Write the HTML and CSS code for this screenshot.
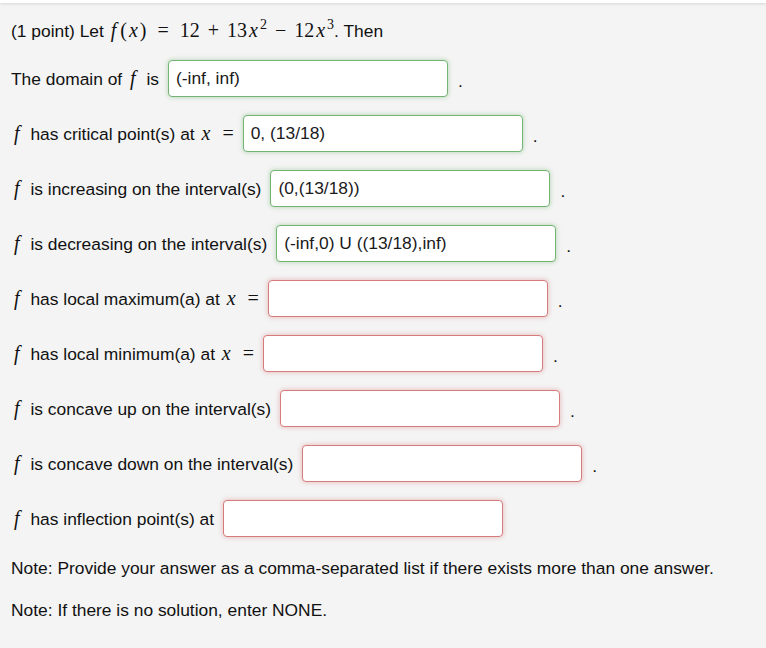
FILE: index.html
```html
<!DOCTYPE html>
<html lang="en">
<head>
    <meta charset="UTF-8">
    <meta name="viewport" content="width=device-width, initial-scale=1.0">
    <title>Problem</title>
    <link rel="stylesheet" href="styles.css">
</head>
<body>
    <div class="top-bar"></div>
    <div class="problem">
        <p class="intro">(1 point) Let <span class="math"><i class="fn">f</i>(<i class="var">x</i>)<span class="rel">=</span>12<span class="bin">+</span>13<i class="var">x</i><sup>2</sup><span class="bin">&minus;</span>12<i class="var">x</i><sup>3</sup></span>. Then</p>

        <div class="row">
            <span class="label">The domain of <i class="mi">f</i> is</span>
            <input class="answer correct" type="text" value="(-inf, inf)">
            <span class="dot">.</span>
        </div>
        <div class="row">
            <span class="label"><i class="mi">f</i> has critical point(s) at <span class="math"><i class="var">x</i><span class="rel">=</span></span></span>
            <input class="answer correct" type="text" value="0, (13/18)">
            <span class="dot">.</span>
        </div>
        <div class="row">
            <span class="label"><i class="mi">f</i> is increasing on the interval(s)</span>
            <input class="answer correct" type="text" value="(0,(13/18))">
            <span class="dot">.</span>
        </div>
        <div class="row">
            <span class="label"><i class="mi">f</i> is decreasing on the interval(s)</span>
            <input class="answer correct" type="text" value="(-inf,0) U ((13/18),inf)">
            <span class="dot">.</span>
        </div>
        <div class="row">
            <span class="label"><i class="mi">f</i> has local maximum(a) at <span class="math"><i class="var">x</i><span class="rel">=</span></span></span>
            <input class="answer wrong" type="text" value="">
            <span class="dot">.</span>
        </div>
        <div class="row">
            <span class="label"><i class="mi">f</i> has local minimum(a) at <span class="math"><i class="var">x</i><span class="rel">=</span></span></span>
            <input class="answer wrong" type="text" value="">
            <span class="dot">.</span>
        </div>
        <div class="row">
            <span class="label"><i class="mi">f</i> is concave up on the interval(s)</span>
            <input class="answer wrong" type="text" value="">
            <span class="dot">.</span>
        </div>
        <div class="row">
            <span class="label"><i class="mi">f</i> is concave down on the interval(s)</span>
            <input class="answer wrong" type="text" value="">
            <span class="dot">.</span>
        </div>
        <div class="row">
            <span class="label"><i class="mi">f</i> has inflection point(s) at</span>
            <input class="answer wrong" type="text" value="">
        </div>

        <p class="note">Note: Provide your answer as a comma-separated list if there exists more than one answer.</p>
        <p class="note">Note: If there is no solution, enter NONE.</p>
    </div>
</body>
</html>
```

FILE: styles.css
```css
* {
    box-sizing: border-box;
}

body {
    margin: 0;
    min-height: 100vh;
    background-color: #f4f4f4;
    font-family: Arial, "Liberation Sans", sans-serif;
    font-size: 17.4px;
    color: #111111;
}

.top-bar {
    height: 3px;
    background-color: #ffffff;
    box-shadow: 0 1px 3px rgba(0, 0, 0, 0.12);
}

.problem {
    padding: 0 11px;
}

.intro {
    margin: 17px 0 0;
    line-height: 20px;
}

/* math set in a serif, spaced out to mimic TeX */
.math,
.mi {
    font-family: "Liberation Serif", "DejaVu Serif", serif;
    font-size: 20px;
    font-style: normal;
}

.math i,
.mi {
    font-style: italic;
}

.mi {
    padding: 0 6px 0 3px;
}

.fn {
    padding: 0 4px 0 2px;
}

.var {
    padding: 0 2px;
}

.math sup {
    font-size: 14px;
    line-height: 0;
}

.rel {
    margin: 0 11px;
}

.bin {
    margin: 0 8px;
}

.row {
    display: flex;
    align-items: center;
    height: 37px;
    margin-top: 18px;
}

.intro + .row {
    margin-top: 19px;
}

.label {
    white-space: nowrap;
}

.label .rel {
    margin: 0 0 0 10px;
}

.answer {
    width: 280px;
    height: 37px;
    margin-left: 9px;
    padding: 0 7px;
    border: 1px solid;
    border-radius: 4px;
    background-color: #ffffff;
    font-family: Arial, "Liberation Sans", sans-serif;
    font-size: 17.4px;
    color: #1a1a1a;
}

.answer.correct {
    border-color: #74b374;
    box-shadow: 0 0 5px rgba(92, 170, 92, 0.45);
}

.answer.wrong {
    border-color: #d77c7c;
    box-shadow: 0 0 5px rgba(210, 100, 100, 0.45);
}

.dot {
    margin-left: 10px;
    padding-top: 6px;
}

.note {
    margin: 21px 0 0;
    line-height: 20px;
}

.note + .note {
    margin-top: 22px;
}
```
